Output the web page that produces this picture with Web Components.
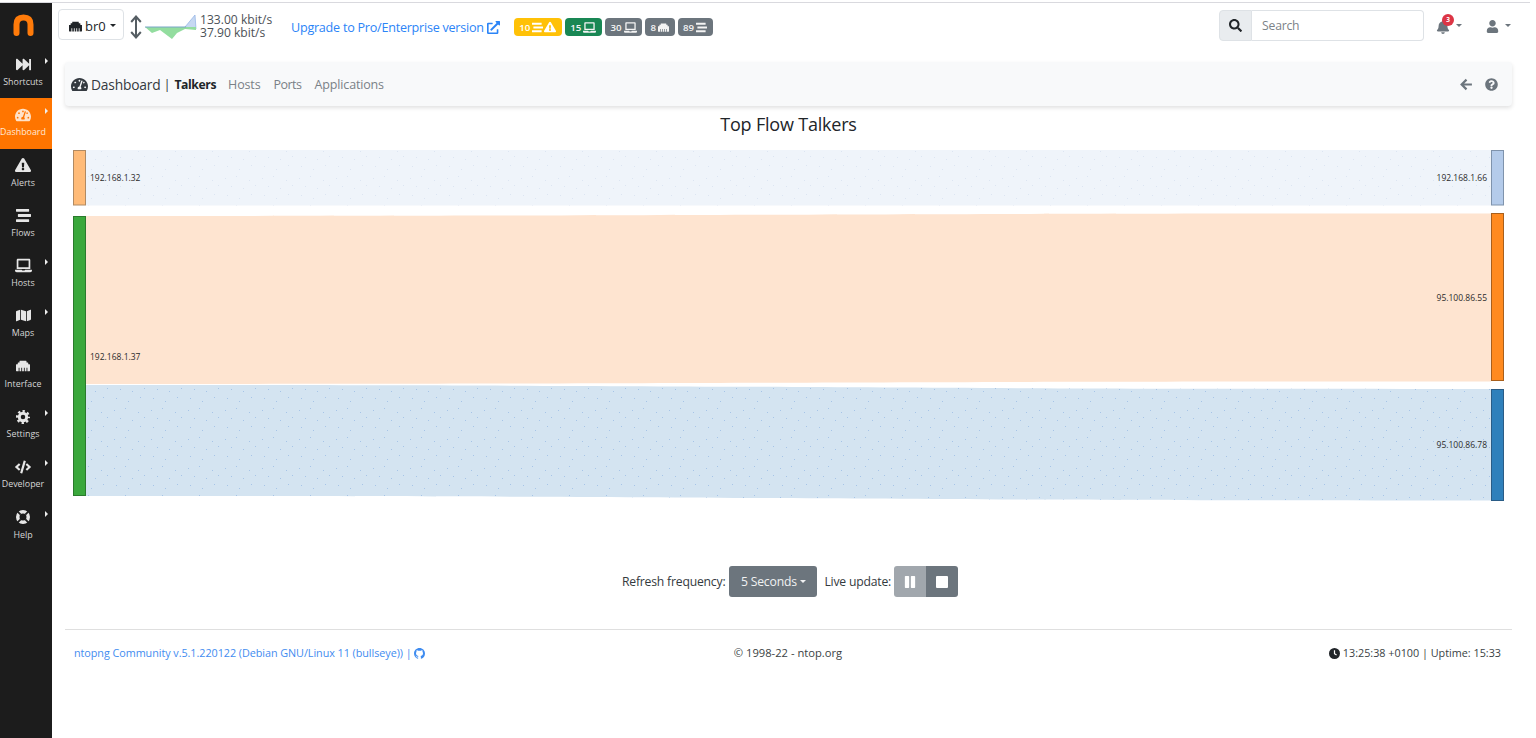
<!DOCTYPE html>
<html lang="en">
<head>
<meta charset="utf-8">
<title>Top Flow Talkers</title>
<style>
html, body { margin: 0; padding: 0; background: #fff; }
body { font-family: "Open Sans", "Noto Sans", sans-serif; color: #212529; overflow: hidden; }
</style>
</head>
<body>
<nt-app></nt-app>
<script>
const ICONS = {
    forward: [512, "M512 76v360c0 6.6-5.4 12-12 12h-40c-6.6 0-12-5.4-12-12V284.1L276.5 440.6c-20.6 17.2-52.5 2.8-52.5-24.6V284.1L52.5 440.6C31.9 457.8 0 443.4 0 416V96c0-27.4 31.9-41.7 52.5-24.6L224 226.8V96c0-27.4 31.9-41.7 52.5-24.6L448 226.8V76c0-6.6 5.4-12 12-12h40c6.6 0 12 5.4 12 12z"],
    gauge: [576, "M288 32C128.94 32 0 160.94 0 320c0 52.8 14.25 102.26 39.06 144.8 5.61 9.62 16.3 15.2 27.44 15.2h443c11.14 0 21.83-5.58 27.44-15.2C561.75 422.26 576 372.8 576 320c0-159.06-128.94-288-288-288zm0 64c14.71 0 26.58 10.13 30.32 23.65-1.11 2.26-2.64 4.23-3.45 6.67l-9.22 27.67c-5.13 3.49-10.97 6.01-17.64 6.01-17.67 0-32-14.33-32-32S270.33 96 288 96zM96 384c-17.67 0-32-14.33-32-32s14.33-32 32-32 32 14.33 32 32-14.33 32-32 32zm48-160c-17.67 0-32-14.33-32-32s14.33-32 32-32 32 14.33 32 32-14.33 32-32 32zm246.77-72.41l-61.33 184C343.13 347.33 352 364.54 352 384c0 11.72-3.38 22.55-8.88 32H232.88c-5.5-9.45-8.88-20.28-8.88-32 0-33.94 26.5-61.43 59.9-63.59l61.34-184.01c4.17-12.56 17.73-19.45 30.36-15.17 12.57 4.19 19.35 17.79 15.17 30.36zm14.66 57.2l15.52-46.55c3.47-1.29 7.13-2.23 11.05-2.23 17.67 0 32 14.33 32 32s-14.33 32-32 32c-11.38-.01-20.89-6.28-26.57-15.22zM480 384c-17.67 0-32-14.33-32-32s14.33-32 32-32 32 14.33 32 32-14.33 32-32 32z"],
    warning: [576, "M569.517 440.013C587.975 472.007 564.806 512 527.94 512H48.054c-36.937 0-59.999-40.055-41.577-71.987L246.423 24.035c18.467-32.009 64.72-31.951 83.154 0l239.94 416.028zM288 354c-25.405 0-46 20.595-46 46s20.595 46 46 46 46-20.595 46-46-20.595-46-46-46zm-43.673-165.346l7.418 136c.347 6.364 5.609 11.346 11.982 11.346h48.546c6.373 0 11.635-4.982 11.982-11.346l7.418-136c.375-6.874-5.098-12.654-11.982-12.654h-63.383c-6.884 0-12.356 5.78-11.981 12.654z"],
    stream: [512, "M16 128h416c8.84 0 16-7.16 16-16V48c0-8.84-7.16-16-16-16H16C7.16 32 0 39.16 0 48v64c0 8.84 7.16 16 16 16zm480 80H80c-8.84 0-16 7.16-16 16v64c0 8.84 7.16 16 16 16h416c8.84 0 16-7.16 16-16v-64c0-8.84-7.16-16-16-16zm-64 176H16c-8.84 0-16 7.16-16 16v64c0 8.84 7.16 16 16 16h416c8.84 0 16-7.16 16-16v-64c0-8.84-7.16-16-16-16z"],
    laptop: [640, "M624 416H381.54c-.74 19.81-14.71 32-32.74 32H288c-18.69 0-33.02-17.47-32.77-32H16c-8.8 0-16 7.2-16 16v16c0 35.2 28.8 64 64 64h512c35.2 0 64-28.8 64-64v-16c0-8.8-7.2-16-16-16zM576 48c0-26.4-21.6-48-48-48H112C85.6 0 64 21.6 64 48v336h512V48zm-64 272H128V64h384v256z"],
    map: [576, "M0 117.66v346.32c0 11.32 11.43 19.06 21.94 14.86L160 416V32L20.12 87.95A32.006 32.006 0 0 0 0 117.66zM192 416l192 64V96L192 32v384zM554.06 33.16L416 96v384l139.88-55.95A31.996 31.996 0 0 0 576 394.34V48.02c0-11.32-11.43-19.06-21.94-14.86z"],
    ethernet: [512, "M496 192h-48v-48c0-8.8-7.2-16-16-16h-48V80c0-8.8-7.2-16-16-16H144c-8.8 0-16 7.2-16 16v48H80c-8.8 0-16 7.2-16 16v48H16c-8.8 0-16 7.2-16 16v224c0 8.8 7.2 16 16 16h80V320h32v128h64V320h32v128h64V320h32v128h64V320h32v128h80c8.8 0 16-7.2 16-16V208c0-8.8-7.2-16-16-16z"],
    code: [640, "M278.9 511.5l-61-17.7c-6.4-1.8-10-8.5-8.2-14.9L346.2 8.7c1.8-6.4 8.5-10 14.9-8.2l61 17.7c6.4 1.8 10 8.5 8.2 14.9L293.8 503.3c-1.9 6.4-8.5 10.1-14.9 8.2zm-114-112.2l43.5-46.4c4.6-4.9 4.3-12.7-.8-17.2L117 256l90.6-79.7c5.1-4.5 5.5-12.3.8-17.2l-43.5-46.4c-4.5-4.8-12.1-5.1-17-.5L3.8 247.2c-5.1 4.7-5.1 12.8 0 17.5l144.1 135.1c4.9 4.6 12.5 4.4 17-.5zm327.2.6l144.1-135.1c5.1-4.7 5.1-12.8 0-17.5L492.1 112.1c-4.8-4.5-12.4-4.3-17 .5L431.6 159c-4.6 4.9-4.3 12.7.8 17.2L523 256l-90.6 79.7c-5.1 4.5-5.5 12.3-.8 17.2l43.5 46.4c4.5 4.9 12.1 5.1 17 .6z"],
    search: [512, "M505 442.7L405.3 343c-4.5-4.5-10.6-7-17-7H372c27.6-35.3 44-79.7 44-128C416 93.1 322.9 0 208 0S0 93.1 0 208s93.1 208 208 208c48.3 0 92.7-16.4 128-44v16.3c0 6.4 2.5 12.5 7 17l99.7 99.7c9.4 9.4 24.6 9.4 33.9 0l28.3-28.3c9.4-9.4 9.4-24.6.1-34zM208 336c-70.7 0-128-57.2-128-128 0-70.7 57.2-128 128-128 70.7 0 128 57.2 128 128 0 70.7-57.2 128-128 128z"],
    bell: [448, "M224 512c35.32 0 63.97-28.65 63.97-64H160.03c0 35.35 28.65 64 63.97 64zm215.39-149.71c-19.32-20.76-55.47-51.99-55.47-154.29 0-77.7-54.48-139.9-127.94-155.16V32c0-17.67-14.32-32-31.98-32s-31.98 14.33-31.98 32v20.84C118.56 68.1 64.08 130.3 64.08 208c0 102.3-36.15 133.53-55.47 154.29-6 6.45-8.66 14.16-8.61 21.71.11 16.4 12.98 32 32.1 32h383.8c19.12 0 32-15.6 32.1-32 .05-7.55-2.61-15.27-8.61-21.71z"],
    user: [448, "M224 256c70.7 0 128-57.3 128-128S294.7 0 224 0 96 57.3 96 128s57.3 128 128 128zm89.6 32h-16.7c-22.2 10.2-46.9 16-72.9 16s-50.6-5.8-72.9-16h-16.7C60.2 288 0 348.2 0 422.4V464c0 26.5 21.5 48 48 48h352c26.5 0 48-21.5 48-48v-41.6c0-74.2-60.2-134.4-134.4-134.4z"],
    question: [512, "M504 256c0 136.997-111.043 248-248 248S8 392.997 8 256C8 119.083 119.043 8 256 8s248 111.083 248 248zM262.655 90c-54.497 0-89.255 22.957-116.549 63.758-3.536 5.286-2.353 12.415 2.715 16.258l34.699 26.31c5.205 3.947 12.621 3.008 16.665-2.122 17.864-22.658 30.113-35.797 57.303-35.797 20.429 0 45.698 13.148 45.698 32.958 0 14.976-12.363 22.667-32.534 33.976C247.128 238.528 216 254.941 216 296v4c0 6.627 5.373 12 12 12h56c6.627 0 12-5.373 12-12v-1.333c0-28.462 83.186-29.647 83.186-106.667 0-58.002-60.165-102-116.531-102zM256 338c-25.365 0-46 20.635-46 46 0 25.364 20.635 46 46 46s46-20.636 46-46c0-25.365-20.635-46-46-46z"],
    external: [512, "M432 320h-32a16 16 0 0 0-16 16v112H64V128h144a16 16 0 0 0 16-16V80a16 16 0 0 0-16-16H48a48 48 0 0 0-48 48v352a48 48 0 0 0 48 48h352a48 48 0 0 0 48-48V336a16 16 0 0 0-16-16zM488 0H360c-21.37 0-32.05 25.91-17 41l35.73 35.73L135 320.37a24 24 0 0 0 0 34L157.67 377a24 24 0 0 0 34 0l243.61-243.68L471 169c15 15 41 4.5 41-17V24a24 24 0 0 0-24-24z"],
    github: [16, "M8 0C3.58 0 0 3.58 0 8c0 3.54 2.29 6.53 5.47 7.59.4.07.55-.17.55-.38 0-.19-.01-.82-.01-1.49-2.01.37-2.53-.49-2.69-.94-.09-.23-.48-.94-.82-1.13-.28-.15-.68-.52-.01-.53.63-.01 1.08.58 1.23.82.72 1.21 1.87.87 2.33.66.07-.52.28-.87.51-1.07-1.78-.2-3.64-.89-3.64-3.95 0-.87.31-1.59.82-2.15-.08-.2-.36-1.02.08-2.12 0 0 .67-.21 2.2.82.64-.18 1.32-.27 2-.27.68 0 1.36.09 2 .27 1.53-1.04 2.2-.82 2.2-.82.44 1.1.16 1.92.08 2.12.51.56.82 1.27.82 2.15 0 3.07-1.87 3.75-3.65 3.95.29.25.54.73.54 1.48 0 1.07-.01 1.93-.01 2.2 0 .21.15.46.55.38A8.013 8.013 0 0016 8c0-4.42-3.58-8-8-8z"]
};

// these ones are built from plain shapes
const SHAPES = {
    cog: `<svg viewBox="0 0 24 24"><circle cx="12" cy="12" r="6.400" fill="none" stroke="currentColor" stroke-width="5"/><circle cx="12" cy="12" r="10" fill="none" stroke="currentColor" stroke-width="4" stroke-dasharray="4 3.854" stroke-dashoffset="2"/></svg>`,
    help: `<svg viewBox="0 0 24 24"><circle cx="12" cy="12" r="9" fill="none" stroke="currentColor" stroke-width="6"/><g stroke="#1c1c1c" stroke-width="3.200"><path d="M2.500 2.500l5.500 5.500M21.500 2.500l-5.500 5.500M2.500 21.500l5.500-5.500M21.500 21.500l-5.500-5.500"/></g></svg>`,
    clock: `<svg viewBox="0 0 24 24"><circle cx="12" cy="12" r="12" fill="currentColor"/><path d="M12 5v7.500l4.500 3" fill="none" stroke="#fff" stroke-width="2.600"/></svg>`,
    arrowleft: `<svg viewBox="0 0 24 24"><path d="M22 12H4M12 3l-9 9 9 9" fill="none" stroke="currentColor" stroke-width="4"/></svg>`,
    updown: `<svg viewBox="0 0 12 24"><path d="M6 2v20M1.200 7L6 1.500 10.800 7M1.200 17L6 22.500 10.800 17" fill="none" stroke="currentColor" stroke-width="2"/></svg>`,
    pause: `<svg viewBox="0 0 12 14"><rect x="0" y="0" width="5" height="14" rx=".8" fill="currentColor"/><rect x="7" y="0" width="5" height="14" rx=".8" fill="currentColor"/></svg>`,
    stop: `<svg viewBox="0 0 12 12"><rect width="12" height="12" rx="1" fill="currentColor"/></svg>`
};

class NtIcon extends HTMLElement {
    connectedCallback() {
        const name = this.getAttribute("name");
        const size = this.getAttribute("size") || 14;
        const icon = ICONS[name];
        const svg = icon
            ? `<svg viewBox="0 0 ${icon[0]} ${icon[0] === 16 ? 16 : 512}"><path fill="currentColor" d="${icon[1]}"/></svg>`
            : SHAPES[name];
        this.attachShadow({mode: "open"}).innerHTML = `
            <style>
            :host { display: inline-flex; width: ${size}px; height: ${size}px; flex: none; align-items: center; justify-content: center; }
            svg { width: 100%; height: 100%; display: block; }
            </style>
            ${svg}
        `;
    }
}

class NtSideItem extends HTMLElement {
    connectedCallback() {
        const caret = this.hasAttribute("caret") ? `<span class="caret"></span>` : "";
        const size = this.getAttribute("size") || 15;
        this.attachShadow({mode: "open"}).innerHTML = `
            <style>
            :host { display: flex; flex-direction: column; align-items: center; box-sizing: border-box; height: 50.3px; padding-right: 6px; position: relative; color: #d6d6d6; }
            :host([active]) { background: #ff7500; color: #ffe9d6; }
            .ic { height: 15px; margin-top: 9px; display: flex; align-items: center; color: #e6e6e6; }
            :host([active]) .ic { color: #ffe2c8; }
            .label { font-size: 8.900px; line-height: 13px; margin-top: 3px; white-space: nowrap; }
            .caret { position: absolute; left: 45px; top: 10px; border-left: 3.500px solid #eee; border-top: 3px solid transparent; border-bottom: 3px solid transparent; }
            </style>
            <div class="ic"><nt-icon name="${this.getAttribute("icon")}" size="${size}"></nt-icon></div>
            <div class="label"><slot></slot></div>
            ${caret}
        `;
    }
}

class NtSidebar extends HTMLElement {
    connectedCallback() {
        this.attachShadow({mode: "open"}).innerHTML = `
            <style>
            :host { display: block; width: 52px; flex: none; background: #1c1c1c; box-sizing: border-box; height: 735px; }
            .logo { height: 45px; box-sizing: border-box; padding: 10px 0 0 12px; }
            .logo svg { display: block; width: 23px; height: 26px; }
            </style>
            <div class="logo">
                <svg viewBox="0 0 23 26"><path d="M4.500 20V11.500Q4.500 4.500 11.500 4.500Q18.500 4.500 18.500 11.500V20" fill="none" stroke="#ff7b0a" stroke-width="6" stroke-linecap="round"/></svg>
            </div>
            <nt-side-item icon="forward" caret>Shortcuts</nt-side-item>
            <nt-side-item icon="gauge" caret active size="16">Dashboard</nt-side-item>
            <nt-side-item icon="warning" size="16">Alerts</nt-side-item>
            <nt-side-item icon="stream">Flows</nt-side-item>
            <nt-side-item icon="laptop" caret size="17">Hosts</nt-side-item>
            <nt-side-item icon="map" caret>Maps</nt-side-item>
            <nt-side-item icon="ethernet" size="14">Interface</nt-side-item>
            <nt-side-item icon="cog" caret size="14">Settings</nt-side-item>
            <nt-side-item icon="code" caret size="16">Developer</nt-side-item>
            <nt-side-item icon="help" caret size="14">Help</nt-side-item>
        `;
    }
}

class NtBadge extends HTMLElement {
    connectedCallback() {
        this.attachShadow({mode: "open"}).innerHTML = `
            <style>
            :host { display: inline-flex; align-items: center; gap: 2px; height: 18px; padding: 0 5.500px; border-radius: 4px; box-sizing: border-box; background: #6c757d; color: #f4f4f4; font-size: 9.700px; font-weight: 600; }
            :host([kind="warning"]) { background: #ffc107; color: #fff; gap: 1.500px; }
            :host([kind="success"]) { background: #198754; }
            </style>
            <slot></slot>
        `;
    }
}

class NtTopbar extends HTMLElement {
    connectedCallback() {
        this.attachShadow({mode: "open"}).innerHTML = `
            <style>
            :host { display: flex; align-items: center; height: 45px; padding-left: 6px; padding-right: 25px; font-size: 13px; }
            .iface { display: flex; align-items: center; gap: 3px; width: 66px; height: 31px; margin-top: -2px; box-sizing: border-box; padding: 3px 0 0 10px; border: 1px solid #dee2e6; border-radius: 4px; color: #212529; }
            .caret { display: inline-block; border-top: 3.500px solid currentColor; border-left: 3px solid transparent; border-right: 3px solid transparent; margin-left: 1px; margin-bottom: 2px; }
            .updown { color: #555d63; width: 12px; height: 24px; margin-left: 6px; margin-top: 2px; }
            .spark { display: block; width: 54px; height: 28px; margin-left: 2px; margin-top: 3px; }
            .rates { width: 91px; margin-left: 2px; color: #4b5156; line-height: 12.400px; font-size: 12.100px; margin-top: 2px; white-space: nowrap; }
            a { color: #2b84f7; text-decoration: none; display: flex; align-items: center; gap: 3px; font-size: 12.600px; letter-spacing: -.25px; white-space: nowrap; margin-top: 3px; }
            .badges { display: flex; gap: 3px; margin-left: 14px; margin-top: 3px; }
            .spacer { flex: 1; }
            .search { display: flex; width: 205px; height: 31px; margin-top: -1px; }
            .addon { width: 33px; background: #e9ecef; border: 1px solid #dee2e6; border-radius: 4px 0 0 4px; box-sizing: border-box; display: flex; align-items: center; justify-content: center; color: #212529; }
            .input { flex: 1; border: 1px solid #dee2e6; border-left: 0; border-radius: 0 4px 4px 0; padding-left: 10px; line-height: 29px; color: #7b8288; font-size: 12.200px; letter-spacing: -.2px; }
            .bell { position: relative; display: flex; align-items: center; margin-left: 12px; color: #6c757d; gap: 6px; margin-top: 2px; }
            .count { position: absolute; left: 6px; top: -6px; width: 12px; height: 12px; border-radius: 50%; background: #dc3545; color: #fff; font-size: 6.500px; font-weight: 700; text-align: center; line-height: 12px; }
            .bell .caret { margin: 0 0 2px; }
            .user { display: flex; align-items: center; margin-left: 24px; color: #6c757d; gap: 6px; margin-top: 2px; }
            .user .caret { margin: 0 0 2px; }
            </style>
            <div class="iface"><nt-icon name="ethernet" size="13"></nt-icon><span>br0</span><span class="caret"></span></div>
            <nt-icon class="updown" name="updown"></nt-icon>
            <svg class="spark" viewBox="0 0 54 28">
                <path d="M41 14L51 2 52 16z" fill="#c6d8f2" stroke="#8fb0e4" stroke-width=".7"/>
                <path d="M1 14H52V17L41 16 33 20 28 26 16 17 8 20z" fill="#93dd9f"/>
                <path d="M1 14H42" stroke="#7ba6c9" stroke-width="1"/>
            </svg>
            <div class="rates">133.00 kbit/s<br>37.90 kbit/s</div>
            <a>Upgrade to Pro/Enterprise version <nt-icon name="external" size="13"></nt-icon></a>
            <div class="badges">
                <nt-badge kind="warning">10 <nt-icon name="stream" size="11"></nt-icon><nt-icon name="warning" size="12"></nt-icon></nt-badge>
                <nt-badge kind="success">15 <nt-icon name="laptop" size="13"></nt-icon></nt-badge>
                <nt-badge>30 <nt-icon name="laptop" size="13"></nt-icon></nt-badge>
                <nt-badge>8 <nt-icon name="ethernet" size="11"></nt-icon></nt-badge>
                <nt-badge>89 <nt-icon name="stream" size="11"></nt-icon></nt-badge>
            </div>
            <div class="spacer"></div>
            <div class="search">
                <div class="addon"><nt-icon name="search" size="13"></nt-icon></div>
                <div class="input">Search</div>
            </div>
            <div class="bell"><nt-icon name="bell" size="14"></nt-icon><span class="count">3</span><span class="caret"></span></div>
            <div class="user"><nt-icon name="user" size="13"></nt-icon><span class="caret"></span></div>
        `;
    }
}

class NtSubnav extends HTMLElement {
    connectedCallback() {
        this.attachShadow({mode: "open"}).innerHTML = `
            <style>
            :host { display: flex; align-items: center; height: 44px; margin-top: 14px; padding: 0 14px 0 6px; background: #f8f9fa; border-radius: 4px; box-shadow: 0 2px 4px rgba(0,0,0,.12); font-size: 12.500px; letter-spacing: -.15px; color: #7a8187; }
            .title { display: flex; align-items: center; gap: 3px; font-size: 13.800px; letter-spacing: -.2px; color: #343a40; }
            .sep { margin: 0 4px 0 3px; color: #343a40; font-size: 13px; }
            b { color: #212529; font-weight: 700; margin-right: 12px; font-size: 12.200px; letter-spacing: -.4px; }
            span.l { margin-right: 13px; }
            span.p { letter-spacing: -.5px; }
            .spacer { flex: 1; }
            .r { color: #6c757d; }
            .r + .r { margin-left: 12px; }
            </style>
            <div class="title"><nt-icon name="gauge" size="17"></nt-icon>Dashboard</div>
            <span class="sep">|</span>
            <b>Talkers</b>
            <span class="l">Hosts</span>
            <span class="l p">Ports</span>
            <span class="l">Applications</span>
            <div class="spacer"></div>
            <nt-icon class="r" name="arrowleft" size="13"></nt-icon>
            <nt-icon class="r" name="question" size="13"></nt-icon>
        `;
    }
}

class NtSankey extends HTMLElement {
    connectedCallback() {
        const nodes = [
            {x: 73, y: 150, h: 55.500, fill: "#ffbb78", stroke: "#b08a63"},
            {x: 73, y: 216, h: 280, fill: "#3aa83c", stroke: "#2a7a2c"},
            {x: 1491, y: 150, h: 55.500, fill: "#b4cbea", stroke: "#7f93ac"},
            {x: 1491, y: 213, h: 168, fill: "#ff8a1f", stroke: "#a85f1c"},
            {x: 1491, y: 389, h: 112, fill: "#2f80bb", stroke: "#2a5c86"}
        ];
        const links = [
            {t: [150, 150], b: [205.500, 205.500], fill: "#eff4fa", dots: "a"},
            {t: [216, 213.500], b: [384, 381.500], fill: "#fee4d0", dots: ""},
            {t: [385, 389], b: [496, 500.500], fill: "#d4e4f1", dots: "b"}
        ];
        const labels = [
            {x: 90, y: 177.500, text: "192.168.1.32"},
            {x: 90, y: 356.500, text: "192.168.1.37"},
            {x: 1487, y: 177.500, text: "192.168.1.66", end: true},
            {x: 1487, y: 297.500, text: "95.100.86.55", end: true},
            {x: 1487, y: 444.500, text: "95.100.86.78", end: true}
        ];
        const linkPath = l => `M86 ${l.t[0]}C788 ${l.t[0]} 788 ${l.t[1]} 1491 ${l.t[1]}L1491 ${l.b[1]}C788 ${l.b[1]} 788 ${l.b[0]} 86 ${l.b[0]}Z`;
        const dotTile = (id, color, opacity) => `
            <pattern id="${id}" width="37" height="29" patternUnits="userSpaceOnUse">
                <g fill="${color}" opacity="${opacity}">
                    <rect x="3" y="4" width="1" height="1"/><rect x="14" y="2" width="1" height="1"/>
                    <rect x="27" y="6" width="1" height="1"/><rect x="9" y="12" width="1" height="1"/>
                    <rect x="21" y="14" width="1" height="1"/><rect x="33" y="11" width="1" height="1"/>
                    <rect x="5" y="21" width="1" height="1"/><rect x="17" y="24" width="1" height="1"/>
                    <rect x="29" y="20" width="1" height="1"/>
                </g>
            </pattern>`;
        this.attachShadow({mode: "open"}).innerHTML = `
            <style>
            :host { display: block; }
            h4 { margin: 0; height: 34px; line-height: 36px; text-align: center; font-size: 18px; letter-spacing: -.2px; font-weight: 400; color: #212529; }
            svg { display: block; width: 100%; height: 370px; }
            text { font-size: 8.500px; fill: #2b2b2b; dominant-baseline: central; }
            </style>
            <h4>Top Flow Talkers</h4>
            <svg viewBox="65 140 1447 370">
                <defs>${dotTile("dotsa", "#c4d2e8", .45)}${dotTile("dotsb", "#9dbfe6", .85)}</defs>
                ${links.map(l => `<path d="${linkPath(l)}" fill="${l.fill}"/>${l.dots ? `<path d="${linkPath(l)}" fill="url(#dots${l.dots})"/>` : ""}`).join("")}
                ${nodes.map(n => `<rect x="${n.x + .5}" y="${n.y + .5}" width="12" height="${n.h - 1}" fill="${n.fill}" stroke="${n.stroke}"/>`).join("")}
                ${labels.map(t => `<text x="${t.x}" y="${t.y}" text-anchor="${t.end ? "end" : "start"}">${t.text}</text>`).join("")}
            </svg>
        `;
    }
}

class NtRefresh extends HTMLElement {
    connectedCallback() {
        this.attachShadow({mode: "open"}).innerHTML = `
            <style>
            :host { display: flex; justify-content: center; align-items: center; height: 31px; margin-top: 56px; font-size: 12.200px; letter-spacing: -.2px; color: #343a40; padding-left: 3px; }
            .drop { display: flex; align-items: center; justify-content: center; gap: 3px; width: 88px; height: 31px; margin: 0 7px 0 4px; border-radius: 3px; background: #6c757d; color: #f1f2f3; }
            .caret { border-top: 3.500px solid currentColor; border-left: 3px solid transparent; border-right: 3px solid transparent; }
            .group { display: flex; margin-left: 3px; height: 31px; border-radius: 3px; overflow: hidden; color: #fff; }
            .btn { width: 32px; display: flex; align-items: center; justify-content: center; background: #6c757d; }
            .btn.off { background: #a1a7ad; }
            </style>
            <span>Refresh frequency:</span>
            <div class="drop"><span>5 Seconds</span><span class="caret"></span></div>
            <span>Live update:</span>
            <div class="group">
                <div class="btn off"><nt-icon name="pause" size="12"></nt-icon></div>
                <div class="btn"><nt-icon name="stop" size="12"></nt-icon></div>
            </div>
        `;
    }
}

class NtFooter extends HTMLElement {
    connectedCallback() {
        this.attachShadow({mode: "open"}).innerHTML = `
            <style>
            :host { display: grid; grid-template-columns: 1fr auto 1fr; align-items: center; margin-top: 32px; border-top: 1px solid #dfdfdf; padding: 15px 11px 0 9px; font-size: 10.800px; line-height: 16px; color: #3a3f44; }
            .left { display: flex; align-items: center; gap: 2px; color: #3f8cf0; letter-spacing: -.05px; white-space: nowrap; }
            .mid { font-size: 11.200px; margin-left: 1px; }
            .right { display: flex; justify-content: flex-end; align-items: center; gap: 3px; white-space: nowrap; }
            .clock { color: #212529; }
            </style>
            <div class="left">ntopng Community v.5.1.220122 (Debian GNU/Linux 11 (bullseye)) | <nt-icon name="github" size="11"></nt-icon></div>
            <div class="mid">© 1998-22 - ntop.org</div>
            <div class="right"><nt-icon class="clock" name="clock" size="11"></nt-icon>13:25:38 +0100 | Uptime: 15:33</div>
        `;
    }
}

class NtApp extends HTMLElement {
    connectedCallback() {
        this.attachShadow({mode: "open"}).innerHTML = `
            <style>
            :host { display: block; height: 738px; box-sizing: border-box; }
            .line { height: 3px; width: 1530px; box-sizing: border-box; border-bottom: 1px solid #d9d9de; }
            .wrap { display: flex; }
            main { flex: 1; min-width: 0; padding: 0 24px 0 13px; }
            nt-topbar { margin-left: -13px; margin-right: -24px; }
            </style>
            <div class="line"></div>
            <div class="wrap">
                <nt-sidebar></nt-sidebar>
                <main>
                    <nt-topbar></nt-topbar>
                    <nt-subnav></nt-subnav>
                    <nt-sankey></nt-sankey>
                    <nt-refresh></nt-refresh>
                    <nt-footer></nt-footer>
                </main>
            </div>
        `;
    }
}

customElements.define("nt-icon", NtIcon);
customElements.define("nt-side-item", NtSideItem);
customElements.define("nt-sidebar", NtSidebar);
customElements.define("nt-badge", NtBadge);
customElements.define("nt-topbar", NtTopbar);
customElements.define("nt-subnav", NtSubnav);
customElements.define("nt-sankey", NtSankey);
customElements.define("nt-refresh", NtRefresh);
customElements.define("nt-footer", NtFooter);
customElements.define("nt-app", NtApp);
</script>
</body>
</html>
